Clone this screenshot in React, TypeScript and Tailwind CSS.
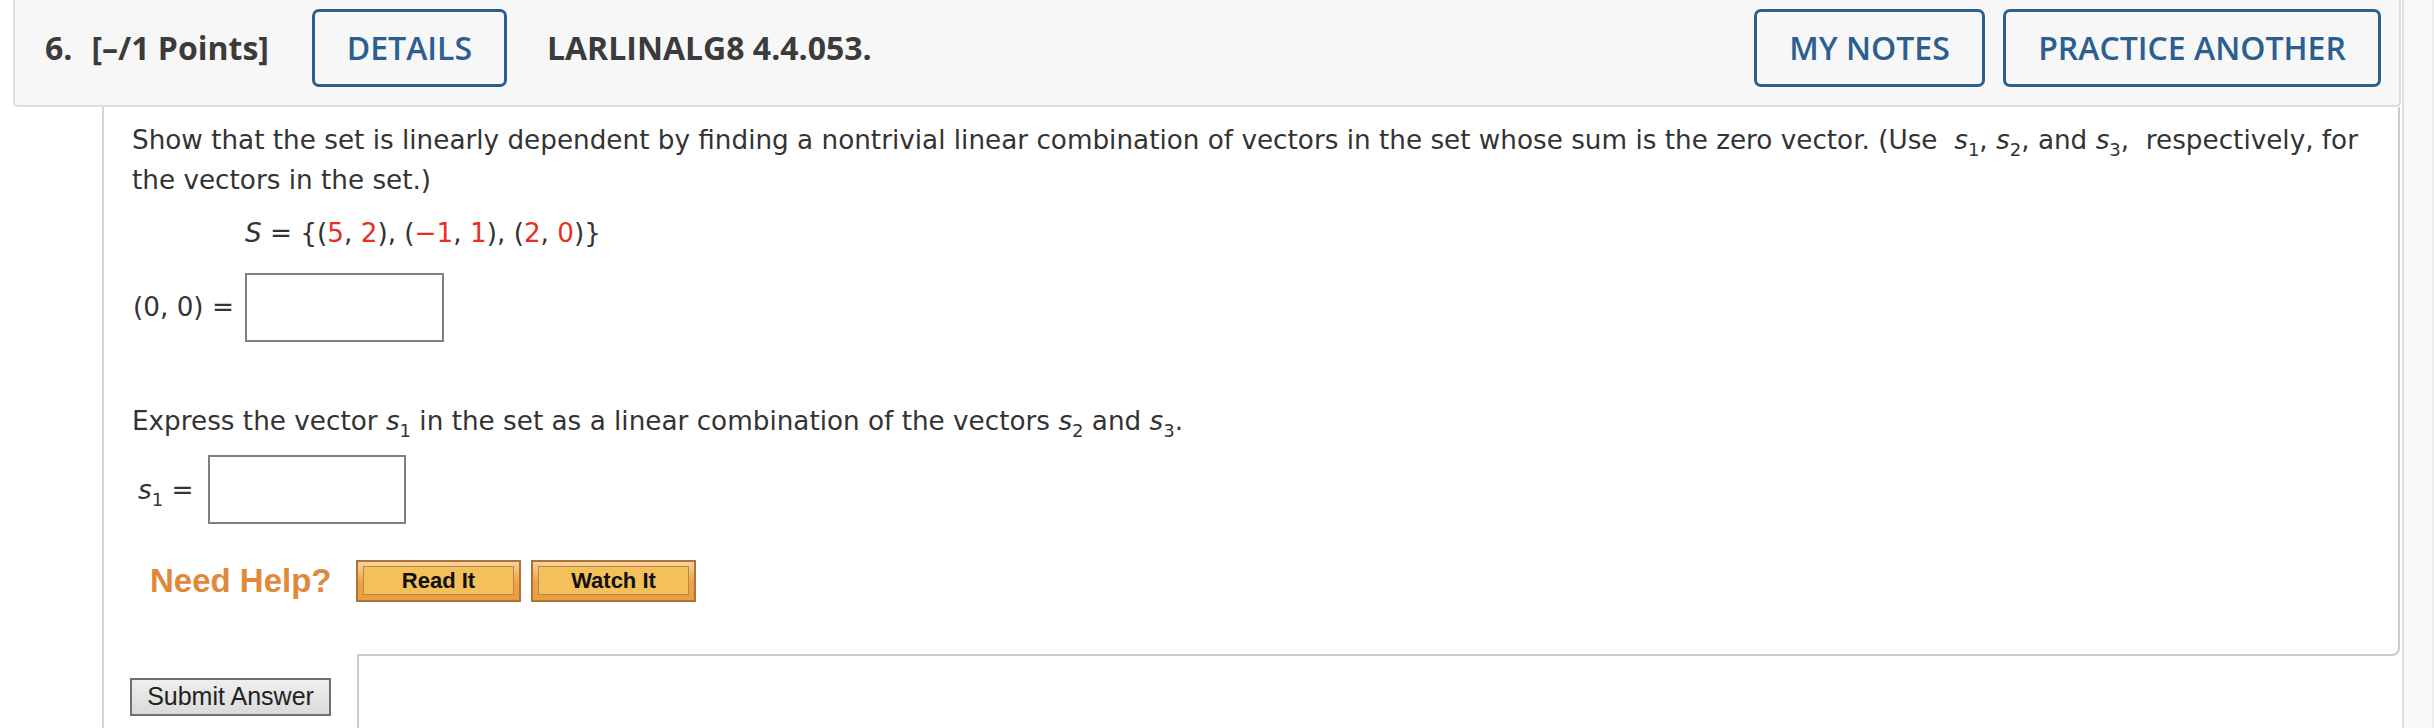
import React from "react";

const S = ({ n }: { n: string }) => (
  <span className="italic">
    s<span className="not-italic text-[18px] leading-none align-[-7px]">{n}</span>
  </span>
);

const R = ({ children }: { children: React.ReactNode }) => (
  <span className="text-[#e5301f]">{children}</span>
);

const HelpButton = ({ label }: { label: string }) => (
  <div className="flex h-[42px] w-[165px] items-stretch border-2 border-[#a9753c] bg-linear-to-b from-[#f6d29e] via-[#eea447] to-[#ec9d3e] px-[5px] pb-[5px] pt-[4px]">
    <div className="flex flex-1 items-center justify-center border border-[#b98847] bg-[#f3c05c] font-['Liberation_Sans',Arial,sans-serif] text-[22px] font-bold text-[#111]">
      {label}
    </div>
  </div>
);

export default function App() {
  return (
    <div className="flex h-[728px] w-[2434px] overflow-hidden bg-white">
      <div className="flex w-[2402px] flex-col">
        {/* Header */}
        <div className="ml-[13px] mr-[1px] flex h-[107px] shrink-0 items-start rounded-b-[5px] border-x-2 border-b-2 border-[#dddddd] bg-[#f7f7f7] pl-[30px] pr-[18px] pt-[9px] font-['Open_Sans',sans-serif] text-[32px] text-[#3b3b3b]">
          <div className="flex h-[78px] items-center font-bold">
            <span>6.</span>
            <span className="ml-[19px]">[–/1 Points]</span>
          </div>
          <div className="ml-[43px] flex h-[78px] w-[195px] items-center justify-center rounded-[7px] border-[3px] border-[#2b5f90] font-semibold text-[#2b5f90]">
            DETAILS
          </div>
          <div className="ml-[40px] flex h-[78px] items-center font-bold">LARLINALG8 4.4.053.</div>
          <div className="flex-1" />
          <div className="flex h-[78px] w-[231px] items-center justify-center rounded-[7px] border-[3px] border-[#2b5f90] font-semibold text-[#2b5f90]">
            MY NOTES
          </div>
          <div className="ml-[18px] flex h-[78px] w-[378px] items-center justify-center rounded-[7px] border-[3px] border-[#2b5f90] font-semibold text-[#2b5f90]">
            PRACTICE ANOTHER
          </div>
        </div>

        {/* Content */}
        <div className="ml-[102px] mr-[2px] flex flex-1 flex-col border-l-2 border-[#d4d4d4]">
          <div className="h-[549px] shrink-0 rounded-br-[8px] border-b-2 border-r-2 border-[#cccccc] pl-[28px] pt-[13px] font-['DejaVu_Sans',Verdana,sans-serif] text-[26.25px] text-[#333333]">
            <div className="h-[40px] whitespace-nowrap leading-[40px]">
              Show that the set is linearly dependent by finding a nontrivial linear combination of vectors in the set whose sum is the zero vector. (Use&nbsp; <S n="1" />, <S n="2" />, and <S n="3" />,&nbsp; respectively, for
            </div>
            <div className="h-[40px] whitespace-nowrap leading-[40px]">the vectors in the set.)</div>

            <div className="mt-[13px] h-[40px] whitespace-nowrap pl-[113px] leading-[40px]">
              <span className="italic">S</span> = {"{"}(<R>5</R>, <R>2</R>), (<R>−1</R>, <R>1</R>), (<R>2</R>, <R>0</R>){"}"}
            </div>

            <div className="mt-[20px] flex h-[69px] items-center">
              <span className="whitespace-nowrap pl-[1px]">(0, 0) =</span>
              <div className="ml-[11px] h-[69px] w-[199px] border-2 border-[#808080] bg-white" />
            </div>

            <div className="mt-[59px] h-[40px] whitespace-nowrap leading-[40px]">
              Express the vector <S n="1" /> in the set as a linear combination of the vectors <S n="2" /> and <S n="3" />.
            </div>

            <div className="mt-[14px] flex h-[69px] items-center">
              <div className="w-[76px] whitespace-nowrap pl-[6px] leading-[40px]">
                <S n="1" /> =
              </div>
              <div className="h-[69px] w-[198px] border-2 border-[#808080] bg-white" />
            </div>

            <div className="mt-[36px] flex h-[42px] items-center">
              <div className="w-[224px] pl-[18px] font-['Liberation_Sans',Arial,sans-serif] text-[33px] font-bold text-[#e0893b]">
                Need Help?
              </div>
              <HelpButton label="Read It" />
              <div className="ml-[10px]">
                <HelpButton label="Watch It" />
              </div>
            </div>
          </div>

          <div className="-mt-[2px] w-[255px] flex-1 border-r-2 border-[#cccccc] bg-white pl-[26px] pt-[24px]">
            <div className="flex h-[38px] w-[201px] items-center justify-center border-2 border-[#6f6f6f] bg-linear-to-b from-[#efefef] to-[#dadada] font-['Liberation_Sans',Arial,sans-serif] text-[25px] text-[#222222]">
              Submit Answer
            </div>
          </div>
        </div>
      </div>

      {/* Right strip */}
      <div className="h-full w-[32px] border-x-2 border-l-[#e0e0e0] border-r-[#eeeeee] bg-[#f9f9f9]" />
    </div>
  );
}
